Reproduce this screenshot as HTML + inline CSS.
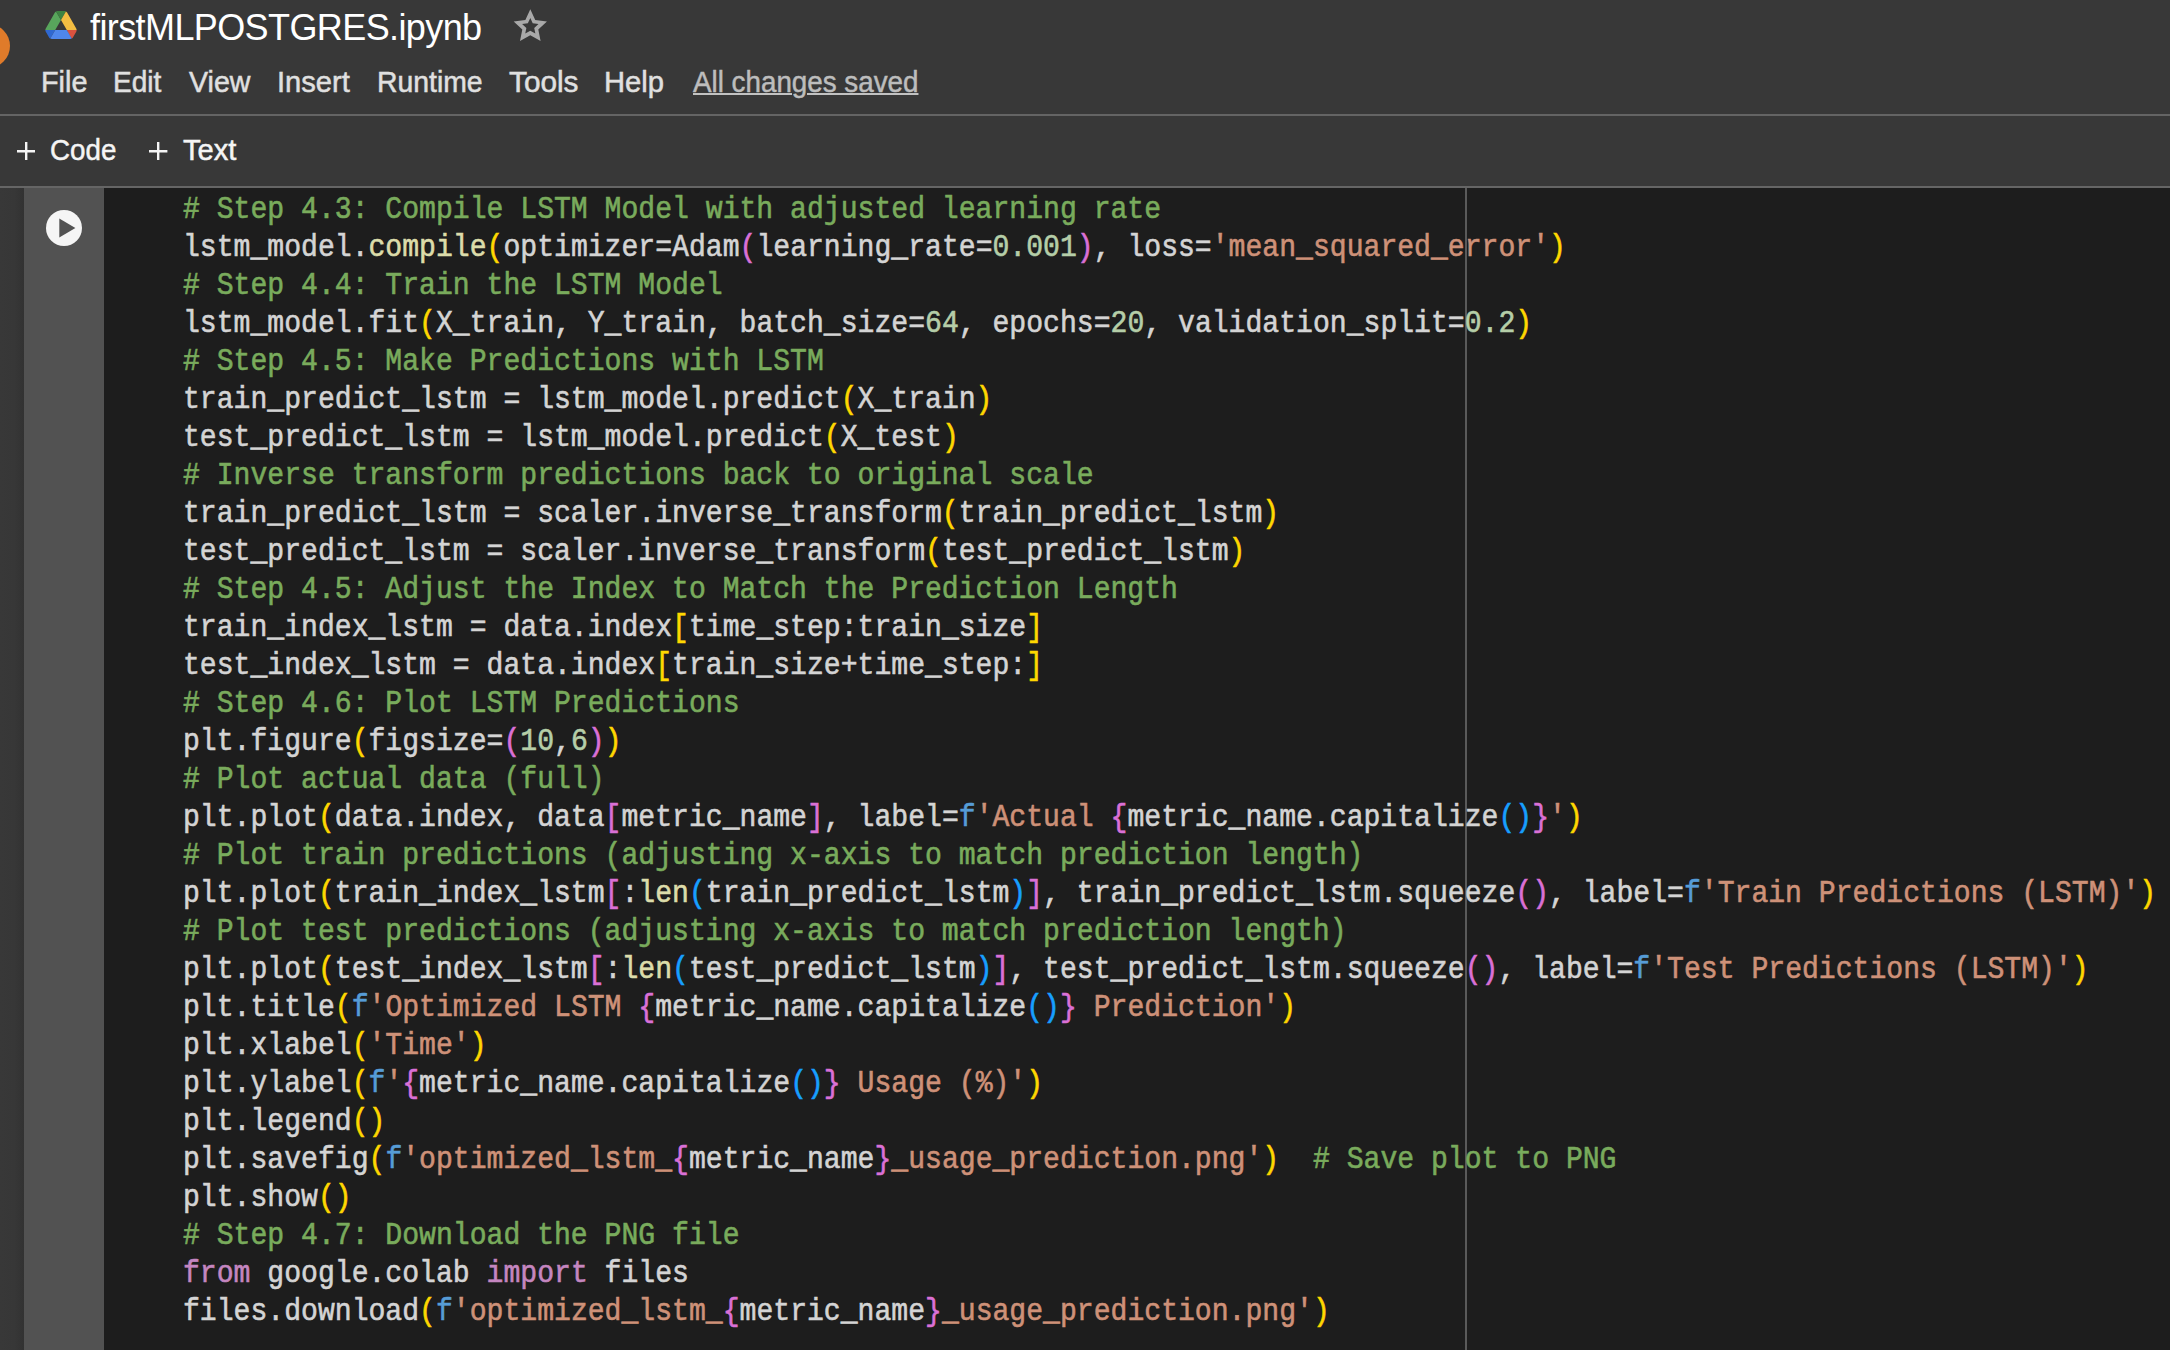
<!DOCTYPE html>
<html><head><meta charset="utf-8">
<style>
html,body{margin:0;padding:0;}
body{width:2170px;height:1350px;overflow:hidden;background:#383838;position:relative;font-family:"Liberation Sans",sans-serif;}
.abs{position:absolute;}
#avatar{left:-34.9px;top:23.9px;width:44.4px;height:44.4px;border-radius:50%;background:#e07b2a;}
#title{left:90px;top:5px;font-size:36px;line-height:46px;color:#ffffff;white-space:nowrap;letter-spacing:-0.6px;}
.menu{top:64px;transform-origin:0 0;-webkit-text-stroke:0.5px currentColor;font-size:30px;line-height:36px;color:#e0e0e0;white-space:nowrap;}
#saved{color:#bdbdbd;text-decoration:underline;text-decoration-thickness:2px;text-underline-offset:1px;text-decoration-color:#c2c2c2;}
.div{left:0;width:2170px;height:2px;background:#646464;}
.tb{top:131.8px;transform-origin:0 0;-webkit-text-stroke:0.5px currentColor;font-size:30px;line-height:36px;color:#f5f5f5;white-space:nowrap;}
#strip{left:0;top:188px;width:24px;height:1162px;background:linear-gradient(to right,#383838 0,#373737 60%,#323232 100%);}
#gutter{left:24px;top:188px;width:80px;height:1162px;background:#525252;}
#codebg{left:104px;top:188px;width:2066px;height:1162px;background:#1d1d1d;}
#ruler{left:1465px;top:188px;width:2px;height:1162px;background:#5a5a5a;}
#play{left:46px;top:210px;width:36px;height:36px;border-radius:50%;background:#f5f5f5;}
#code{left:182.7px;top:190.8px;font-family:"Liberation Mono",monospace;font-size:31px;transform:scaleX(0.9065);transform-origin:0 0;-webkit-text-stroke:0.6px currentColor;line-height:38px;color:#d4d4d4;}
.ln{height:38px;white-space:pre;}
.c{color:#79ab5c}
.f{color:#dcdcaa}
.s{color:#ce9178}
.n{color:#b5cea8}
.k{color:#c586c0}
.p{color:#569cd6}
.b1{color:#ffd700}
.b2{color:#da70d6}
.b3{color:#179fff}
</style></head>
<body>
<div id="avatar" class="abs"></div>
<svg class="abs" style="left:45px;top:11px" width="32" height="28" viewBox="0 0 87.3 78">
<path d="m6.6 66.85 3.85 6.65c.8 1.4 1.95 2.5 3.3 3.3l13.75-23.8h-27.5c0 1.55.4 3.1 1.2 4.5z" fill="#2f68d1"/>
<path d="m43.65 25-13.75-23.8c-1.35.8-2.5 1.9-3.3 3.3l-25.4 44a9.06 9.06 0 0 0 -1.2 4.5h27.5z" fill="#58a65c"/>
<path d="m73.55 76.8c1.35-.8 2.5-1.9 3.3-3.3l1.6-2.75 7.65-13.25c.8-1.4 1.2-2.95 1.2-4.5h-27.502l5.852 11.5z" fill="#d9523f"/>
<path d="m43.65 25 13.75-23.8c-1.35-.8-2.9-1.2-4.5-1.2h-18.5c-1.6 0-3.15.45-4.5 1.2z" fill="#3d8342"/>
<path d="m59.8 53h-32.3l-13.75 23.8c1.35.8 2.9 1.2 4.5 1.2h50.8c1.6 0 3.15-.45 4.5-1.2z" fill="#4f87ec"/>
<path d="m73.4 26.5-12.7-22c-.8-1.4-1.95-2.5-3.3-3.3l-13.75 23.8 16.15 28h27.45c0-1.55-.4-3.1-1.2-4.5z" fill="#f3bd42"/>
</svg>
<div id="title" class="abs">firstMLPOSTGRES.ipynb</div>
<svg class="abs" style="left:505px;top:2px" width="50" height="46" viewBox="0 0 50 46"><path fill="#a9a9a9" fill-rule="evenodd" d="M25.30 7.30 L30.24 18.00 L41.94 19.39 L33.29 27.40 L35.59 38.96 L25.30 33.20 L15.01 38.96 L17.31 27.40 L8.66 19.39 L20.36 18.00Z M25.30 16.00 L27.73 21.26 L33.48 21.94 L29.23 25.88 L30.35 31.56 L25.30 28.73 L20.25 31.56 L21.37 25.88 L17.12 21.94 L22.87 21.26Z"/></svg>
<div class="abs menu" style="left:41px;transform:scaleX(0.96)">File</div>
<div class="abs menu" style="left:113.2px;transform:scaleX(0.935)">Edit</div>
<div class="abs menu" style="left:188.5px;transform:scaleX(0.952)">View</div>
<div class="abs menu" style="left:276.7px;transform:scaleX(0.97)">Insert</div>
<div class="abs menu" style="left:376.5px;transform:scaleX(0.945)">Runtime</div>
<div class="abs menu" style="left:508.6px;transform:scaleX(0.992)">Tools</div>
<div class="abs menu" style="left:604.2px;transform:scaleX(0.972)">Help</div>
<div class="abs menu" id="saved" style="left:692.8px;transform:scaleX(0.926)">All changes saved</div>
<div class="abs div" style="top:114px"></div>
<svg class="abs" style="left:16.7px;top:141.7px" width="18.4" height="18.4" viewBox="0 0 18.4 18.4"><path d="M9.2 0v18.4M0 9.2h18.4" stroke="#f5f5f5" stroke-width="2.4"/></svg>
<div class="abs tb" style="left:49.6px;transform:scaleX(0.925)">Code</div>
<svg class="abs" style="left:149.2px;top:141.7px" width="18.4" height="18.4" viewBox="0 0 18.4 18.4"><path d="M9.2 0v18.4M0 9.2h18.4" stroke="#f5f5f5" stroke-width="2.4"/></svg>
<div class="abs tb" style="left:183px;transform:scaleX(0.97)">Text</div>
<div class="abs div" style="top:186px;background:#656565"></div>
<div id="strip" class="abs"></div>
<div id="gutter" class="abs"></div>
<div id="codebg" class="abs"></div>
<div id="play" class="abs"><svg width="36" height="36" viewBox="0 0 36 36" style="display:block"><path d="M13.3 8.4 L29.4 18 L13.3 27.4 Z" fill="#525252"/></svg></div>
<div id="ruler" class="abs"></div>
<div id="code" class="abs">
<div class="ln"><span class="c"># Step 4.3: Compile LSTM Model with adjusted learning rate</span></div>
<div class="ln">lstm_model.<span class="f">compile</span><span class="b1">(</span>optimizer=Adam<span class="b2">(</span>learning_rate=<span class="n">0.001</span><span class="b2">)</span>, loss=<span class="s">'mean_squared_error'</span><span class="b1">)</span></div>
<div class="ln"><span class="c"># Step 4.4: Train the LSTM Model</span></div>
<div class="ln">lstm_model.fit<span class="b1">(</span>X_train, Y_train, batch_size=<span class="n">64</span>, epochs=<span class="n">20</span>, validation_split=<span class="n">0.2</span><span class="b1">)</span></div>
<div class="ln"><span class="c"># Step 4.5: Make Predictions with LSTM</span></div>
<div class="ln">train_predict_lstm = lstm_model.predict<span class="b1">(</span>X_train<span class="b1">)</span></div>
<div class="ln">test_predict_lstm = lstm_model.predict<span class="b1">(</span>X_test<span class="b1">)</span></div>
<div class="ln"><span class="c"># Inverse transform predictions back to original scale</span></div>
<div class="ln">train_predict_lstm = scaler.inverse_transform<span class="b1">(</span>train_predict_lstm<span class="b1">)</span></div>
<div class="ln">test_predict_lstm = scaler.inverse_transform<span class="b1">(</span>test_predict_lstm<span class="b1">)</span></div>
<div class="ln"><span class="c"># Step 4.5: Adjust the Index to Match the Prediction Length</span></div>
<div class="ln">train_index_lstm = data.index<span class="b1">[</span>time_step:train_size<span class="b1">]</span></div>
<div class="ln">test_index_lstm = data.index<span class="b1">[</span>train_size+time_step:<span class="b1">]</span></div>
<div class="ln"><span class="c"># Step 4.6: Plot LSTM Predictions</span></div>
<div class="ln">plt.figure<span class="b1">(</span>figsize=<span class="b2">(</span><span class="n">10</span>,<span class="n">6</span><span class="b2">)</span><span class="b1">)</span></div>
<div class="ln"><span class="c"># Plot actual data (full)</span></div>
<div class="ln">plt.plot<span class="b1">(</span>data.index, data<span class="b2">[</span>metric_name<span class="b2">]</span>, label=<span class="p">f</span><span class="s">'Actual </span><span class="b2">{</span>metric_name.capitalize<span class="b3">()</span><span class="b2">}</span><span class="s">'</span><span class="b1">)</span></div>
<div class="ln"><span class="c"># Plot train predictions (adjusting x-axis to match prediction length)</span></div>
<div class="ln">plt.plot<span class="b1">(</span>train_index_lstm<span class="b2">[</span>:<span class="f">len</span><span class="b3">(</span>train_predict_lstm<span class="b3">)</span><span class="b2">]</span>, train_predict_lstm.squeeze<span class="b2">()</span>, label=<span class="p">f</span><span class="s">'Train Predictions (LSTM)'</span><span class="b1">)</span></div>
<div class="ln"><span class="c"># Plot test predictions (adjusting x-axis to match prediction length)</span></div>
<div class="ln">plt.plot<span class="b1">(</span>test_index_lstm<span class="b2">[</span>:<span class="f">len</span><span class="b3">(</span>test_predict_lstm<span class="b3">)</span><span class="b2">]</span>, test_predict_lstm.squeeze<span class="b2">()</span>, label=<span class="p">f</span><span class="s">'Test Predictions (LSTM)'</span><span class="b1">)</span></div>
<div class="ln">plt.title<span class="b1">(</span><span class="p">f</span><span class="s">'Optimized LSTM </span><span class="b2">{</span>metric_name.capitalize<span class="b3">()</span><span class="b2">}</span><span class="s"> Prediction'</span><span class="b1">)</span></div>
<div class="ln">plt.xlabel<span class="b1">(</span><span class="s">'Time'</span><span class="b1">)</span></div>
<div class="ln">plt.ylabel<span class="b1">(</span><span class="p">f</span><span class="s">'</span><span class="b2">{</span>metric_name.capitalize<span class="b3">()</span><span class="b2">}</span><span class="s"> Usage (%)'</span><span class="b1">)</span></div>
<div class="ln">plt.legend<span class="b1">()</span></div>
<div class="ln">plt.savefig<span class="b1">(</span><span class="p">f</span><span class="s">'optimized_lstm_</span><span class="b2">{</span>metric_name<span class="b2">}</span><span class="s">_usage_prediction.png'</span><span class="b1">)</span>  <span class="c"># Save plot to PNG</span></div>
<div class="ln">plt.show<span class="b1">()</span></div>
<div class="ln"><span class="c"># Step 4.7: Download the PNG file</span></div>
<div class="ln"><span class="k">from</span> google.colab <span class="k">import</span> files</div>
<div class="ln">files.download<span class="b1">(</span><span class="p">f</span><span class="s">'optimized_lstm_</span><span class="b2">{</span>metric_name<span class="b2">}</span><span class="s">_usage_prediction.png'</span><span class="b1">)</span></div>
</div>
</body></html>
